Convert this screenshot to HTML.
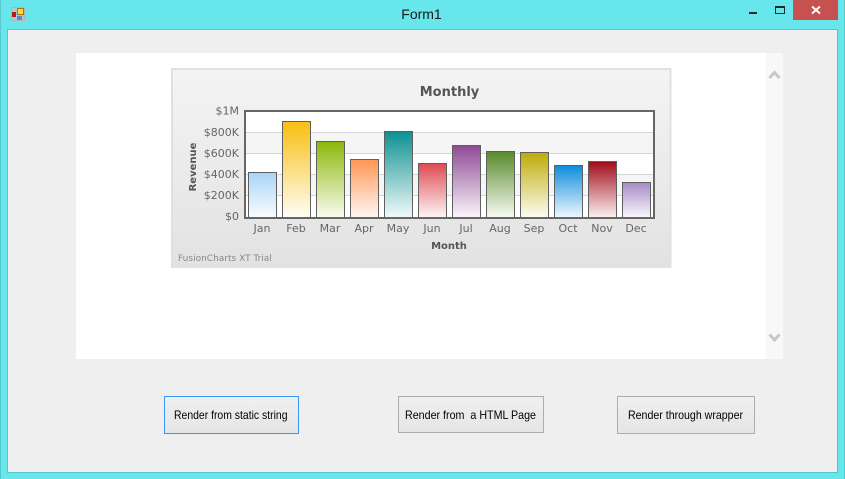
<!DOCTYPE html>
<html>
<head>
<meta charset="utf-8">
<style>
html,body{margin:0;padding:0;width:845px;height:479px;overflow:hidden;background:#67E6EC}
svg{display:block}
.d{font-family:"DejaVu Sans",sans-serif}
.l{font-family:"Liberation Sans",sans-serif}
</style>
</head>
<body>
<svg width="845" height="479" viewBox="0 0 845 479" xmlns="http://www.w3.org/2000/svg">
<defs>
<linearGradient id="bg" x1="0" y1="0" x2="0" y2="1"><stop offset="0" stop-color="#F4F4F4"/><stop offset="1" stop-color="#E2E2E2"/></linearGradient>
<linearGradient id="btn" x1="0" y1="0" x2="0" y2="1"><stop offset="0" stop-color="#F0F0F0"/><stop offset="1" stop-color="#E5E5E5"/></linearGradient>
<linearGradient id="b1" x1="0" y1="0" x2="0" y2="1"><stop offset="0" stop-color="#A9D4F7"/><stop offset="1" stop-color="#FAFDFF"/></linearGradient>
<linearGradient id="b2" x1="0" y1="0" x2="0" y2="1"><stop offset="0" stop-color="#F9BE10"/><stop offset="1" stop-color="#FFFDF6"/></linearGradient>
<linearGradient id="b3" x1="0" y1="0" x2="0" y2="1"><stop offset="0" stop-color="#8BB808"/><stop offset="1" stop-color="#FAFCF2"/></linearGradient>
<linearGradient id="b4" x1="0" y1="0" x2="0" y2="1"><stop offset="0" stop-color="#FF9655"/><stop offset="1" stop-color="#FFF8F4"/></linearGradient>
<linearGradient id="b5" x1="0" y1="0" x2="0" y2="1"><stop offset="0" stop-color="#0B9190"/><stop offset="1" stop-color="#F2FAFA"/></linearGradient>
<linearGradient id="b6" x1="0" y1="0" x2="0" y2="1"><stop offset="0" stop-color="#DD4B51"/><stop offset="1" stop-color="#FEF6F6"/></linearGradient>
<linearGradient id="b7" x1="0" y1="0" x2="0" y2="1"><stop offset="0" stop-color="#8E4A94"/><stop offset="1" stop-color="#FBF6FB"/></linearGradient>
<linearGradient id="b8" x1="0" y1="0" x2="0" y2="1"><stop offset="0" stop-color="#588A2B"/><stop offset="1" stop-color="#F8FBF5"/></linearGradient>
<linearGradient id="b9" x1="0" y1="0" x2="0" y2="1"><stop offset="0" stop-color="#BDAB06"/><stop offset="1" stop-color="#FDFDF3"/></linearGradient>
<linearGradient id="b10" x1="0" y1="0" x2="0" y2="1"><stop offset="0" stop-color="#0C8DDB"/><stop offset="1" stop-color="#EFF8FE"/></linearGradient>
<linearGradient id="b11" x1="0" y1="0" x2="0" y2="1"><stop offset="0" stop-color="#A00B18"/><stop offset="1" stop-color="#FBF1F1"/></linearGradient>
<linearGradient id="b12" x1="0" y1="0" x2="0" y2="1"><stop offset="0" stop-color="#A58BC5"/><stop offset="1" stop-color="#FAF8FD"/></linearGradient>
</defs>

<!-- window frame -->
<rect width="845" height="479" fill="#67E6EC"/>
<rect x="0" y="0" width="1" height="479" fill="#55C8CE"/>
<rect x="844" y="0" width="1" height="479" fill="#55C8CE"/>
<rect x="7" y="29" width="831" height="444" fill="#55C5CB"/>
<rect x="8" y="30" width="829" height="442" fill="#EFEFEF"/>

<!-- app icon -->
<rect x="11.5" y="7.5" width="13" height="13" fill="#A9CDCF" stroke="#B5B5B5"/>
<rect x="12" y="12" width="4" height="5" fill="#B81A10"/>
<rect x="17" y="8" width="7" height="7" fill="#A87408"/>
<rect x="18" y="9" width="5" height="5" fill="#FFD84A"/>
<rect x="17" y="16" width="5" height="4" fill="#5A86E0"/>

<!-- title -->
<text x="421.5" y="19" text-anchor="middle" class="l" font-size="14" fill="#1a1a1a">Form1</text>

<!-- window buttons -->
<rect x="749" y="12" width="8" height="2" fill="#1E2A30"/>
<rect x="775.5" y="6.5" width="9" height="7" fill="none" stroke="#1E2A30"/>
<rect x="775" y="6" width="10" height="2" fill="#1E2A30"/>
<rect x="793" y="0" width="45" height="20" fill="#C75050"/>
<path d="M812 6.5L820 13.5M820 6.5L812 13.5" stroke="#fff" stroke-width="2" fill="none"/>

<!-- browser area -->
<rect x="76" y="53" width="690" height="306" fill="#fff"/>
<rect x="766" y="53" width="17" height="306" fill="#F8F8F8"/>
<path d="M769.5 78L774.5 72.5L779.5 78" stroke="#C8C8C8" stroke-width="3" fill="none"/>
<path d="M769.5 334.5L774.5 340L779.5 334.5" stroke="#C8C8C8" stroke-width="3" fill="none"/>

<!-- chart background -->
<rect x="172" y="69" width="498.5" height="199" fill="url(#bg)"/>
<path d="M172 268V69H670.5V268" fill="none" stroke="#E0E0E0" stroke-width="2"/>

<text x="449.5" y="96" text-anchor="middle" class="d" font-size="13" font-weight="bold" fill="#555">Monthly</text>

<!-- plot -->
<rect x="245" y="111" width="409" height="106.5" fill="#fff"/>
<rect x="245" y="132" width="409" height="21" fill="#F5F5F5"/>
<rect x="245" y="174" width="409" height="21" fill="#F5F5F5"/>
<g stroke="#D5D5D5" stroke-width="1">
<line x1="245" x2="654" y1="132.5" y2="132.5"/>
<line x1="245" x2="654" y1="153.5" y2="153.5"/>
<line x1="245" x2="654" y1="174.5" y2="174.5"/>
<line x1="245" x2="654" y1="195.5" y2="195.5"/>
</g>

<!-- bars -->
<g stroke="#5F5F5F" stroke-width="1">
<rect x="248.5" y="172.5" width="28" height="45" fill="url(#b1)"/>
<rect x="282.5" y="121.5" width="28" height="96" fill="url(#b2)"/>
<rect x="316.5" y="141.5" width="28" height="76" fill="url(#b3)"/>
<rect x="350.5" y="159.5" width="28" height="58" fill="url(#b4)"/>
<rect x="384.5" y="131.5" width="28" height="86" fill="url(#b5)"/>
<rect x="418.5" y="163.5" width="28" height="54" fill="url(#b6)"/>
<rect x="452.5" y="145.5" width="28" height="72" fill="url(#b7)"/>
<rect x="486.5" y="151.5" width="28" height="66" fill="url(#b8)"/>
<rect x="520.5" y="152.5" width="28" height="65" fill="url(#b9)"/>
<rect x="554.5" y="165.5" width="28" height="52" fill="url(#b10)"/>
<rect x="588.5" y="161.5" width="28" height="56" fill="url(#b11)"/>
<rect x="622.5" y="182.5" width="28" height="35" fill="url(#b12)"/>
</g>
<rect x="245" y="111" width="409" height="107" fill="none" stroke="#666" stroke-width="2"/>

<!-- y labels -->
<g class="d" font-size="11" fill="#666" text-anchor="end">
<text x="239" y="114.5">$1M</text>
<text x="239" y="136">$800K</text>
<text x="239" y="157">$600K</text>
<text x="239" y="178">$400K</text>
<text x="239" y="199">$200K</text>
<text x="239" y="220">$0</text>
</g>

<!-- x labels -->
<g class="d" font-size="11" fill="#666" text-anchor="middle">
<text x="262" y="232">Jan</text>
<text x="296" y="232">Feb</text>
<text x="330" y="232">Mar</text>
<text x="364" y="232">Apr</text>
<text x="398" y="232">May</text>
<text x="432" y="232">Jun</text>
<text x="466" y="232">Jul</text>
<text x="500" y="232">Aug</text>
<text x="534" y="232">Sep</text>
<text x="568" y="232">Oct</text>
<text x="602" y="232">Nov</text>
<text x="636" y="232">Dec</text>
</g>

<text x="449" y="249" text-anchor="middle" class="d" font-size="10" font-weight="bold" fill="#555">Month</text>
<text transform="translate(196,167) rotate(-90)" text-anchor="middle" class="d" font-size="10" font-weight="bold" fill="#555">Revenue</text>
<text x="178" y="261" class="d" font-size="9" fill="#888">FusionCharts XT Trial</text>

<!-- buttons -->
<rect x="164.5" y="396.5" width="134" height="37" fill="url(#btn)" stroke="#3399FF"/>
<rect x="398.5" y="396.5" width="145" height="36" fill="url(#btn)" stroke="#ADADAD"/>
<rect x="617.5" y="396.5" width="137" height="37" fill="url(#btn)" stroke="#ADADAD"/>
<g class="l" font-size="12" fill="#000">
<text x="174" y="419" textLength="113.5" lengthAdjust="spacingAndGlyphs">Render from static string</text>
<text x="405" y="419" textLength="131" lengthAdjust="spacingAndGlyphs" xml:space="preserve">Render from  a HTML Page</text>
<text x="628" y="419" textLength="115" lengthAdjust="spacingAndGlyphs">Render through wrapper</text>
</g>
</svg>
</body>
</html>
